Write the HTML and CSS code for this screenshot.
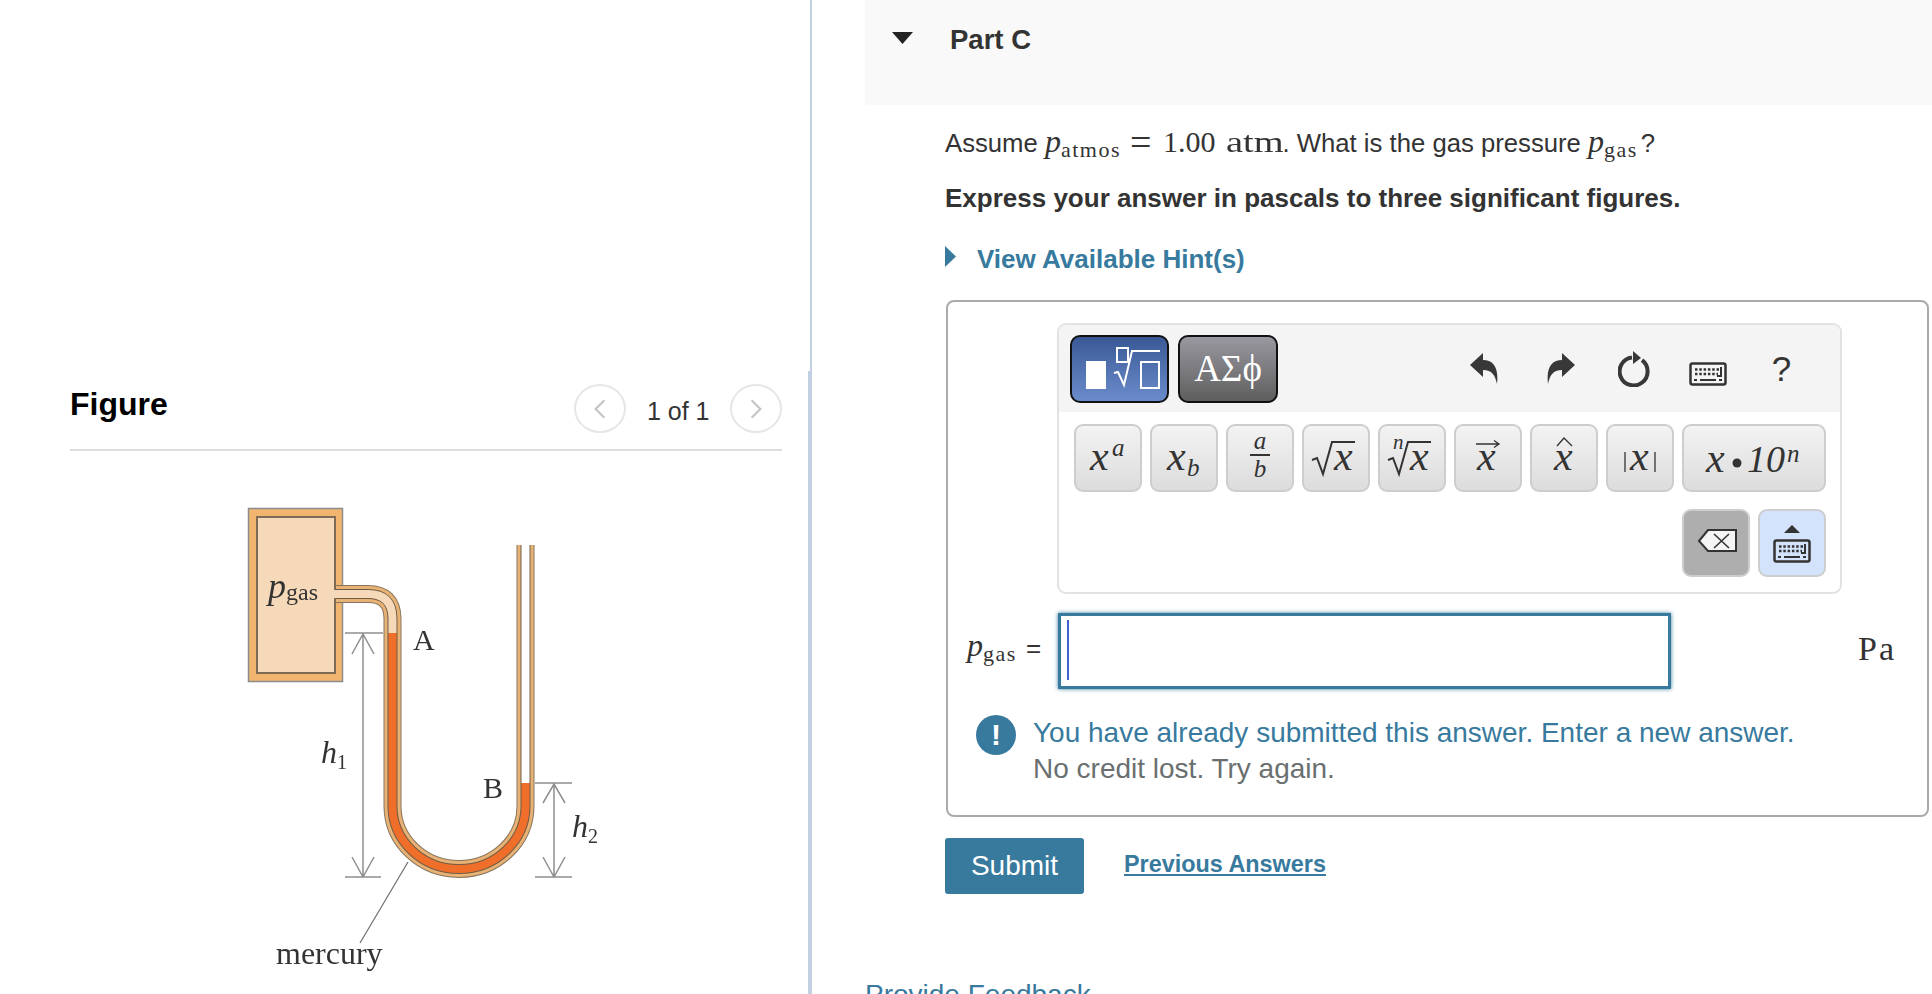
FILE: index.html
```html
<!DOCTYPE html>
<html lang="en">
<head>
<meta charset="utf-8">
<title>Part C</title>
<link rel="stylesheet" href="styles.css">
</head>
<body>
<div class="page">
  <aside class="left">
    <div class="fig-head">
      <h2 class="fig-title">Figure</h2>
      <div class="pager">
        <span class="round"><svg class="chev" viewBox="0 0 16 24"><path d="M13 2 3 12l10 10"/></svg></span>
        <span class="pager-text">1 of 1</span>
        <span class="round"><svg class="chev" viewBox="0 0 16 24"><path d="M3 2l10 10L3 22"/></svg></span>
      </div>
    </div>
    <svg class="diagram" viewBox="70 451 712 543" width="712" height="543">
      <rect x="248.5" y="508.5" width="94" height="173" fill="#f2b56f" stroke="#8c8c8c" stroke-width="1.5"/>
      <rect x="257" y="517" width="78" height="156" fill="#f6d9b8" stroke="#7d6b55" stroke-width="2"/>
      <path class="t1" d="M336 594H368Q392 594 392.500 618V806A66.500 63 0 0 0 525.500 806V545"/>
      <path class="t2" d="M336 594H368Q392 594 392.500 618V806A66.500 63 0 0 0 525.500 806V545"/>
      <path class="t3" d="M336 594H368Q392 594 392.500 618V806A66.500 63 0 0 0 525.500 806V545"/>
      <path class="bore-gas" d="M330 594H368Q392 594 392.500 618V633"/>
      <path class="bore-hg" d="M392.500 633V806A66.500 63 0 0 0 525.500 806V783"/>
      <path class="bore-air" d="M525.500 783V538"/>
      <path class="dim" d="M345 633H383M363 634V877M352 654 363 634 374 654M345 877H381M352 857 363 877 374 857"/>
      <path class="dim" d="M535 783H572M554 784V877M543 803 554 784 565 803M535 877H572M543 857 554 877 565 857"/>
      <path class="leader" d="M408 862 360 943"/>
      <text class="dt dt-p" x="268" y="598">p</text>
      <text class="dt dt-gas" x="286" y="600">gas</text>
      <text class="dt" x="413" y="650">A</text>
      <text class="dt" x="483" y="798">B</text>
      <text class="dt dt-h" x="321" y="763">h</text>
      <text class="dt dt-sub" x="337" y="769">1</text>
      <text class="dt dt-h" x="572" y="837">h</text>
      <text class="dt dt-sub" x="588" y="843">2</text>
      <text class="dt dt-merc" x="276" y="964">mercury</text>
    </svg>
  </aside>

  <div class="divider"><span class="rule-top"></span><span class="rule-bottom"></span></div>

  <main class="right">
    <header class="part-head">
      <svg class="part-caret" viewBox="0 0 21 12"><path d="M0 0H21L10.500 12Z"/></svg>
      <h1 class="part-title">Part C</h1>
    </header>

    <section class="part-body">
      <p class="question">Assume <span class="mi">p</span><span class="sub">atmos</span><span class="mn eq">=</span><span class="mn num">1.00</span><span class="mn atm">atm</span>. What is the gas pressure <span class="mi">p</span><span class="sub">gas</span><span class="qmark">?</span></p>
      <p class="express">Express your answer in pascals to three significant figures.</p>
      <p class="hint"><svg class="hint-caret" viewBox="0 0 11 21"><path d="M0 0 11 10.500 0 21Z"/></svg>View Available Hint(s)</p>

      <div class="answer">
        <div class="editor">
          <div class="ed-head">
            <button class="tab tab-blue">
              <svg viewBox="0 0 95 64" width="95" height="64"><rect x="14" y="24" width="20" height="28" fill="#fff"/><path class="wline" d="M45 11h11v14H45zM69 25h18v26H69zM42 36l4-1 6 13 8-34h28"/></svg>
            </button>
            <button class="tab tab-grey">ΑΣϕ</button>
            <div class="tools">
              <svg class="tool" width="28" height="31" viewBox="0 0 28 31"><path d="M0 12 13 0V7C23 7 29 14 27 31 25 22 22 17 13 17V24Z"/></svg>
              <svg class="tool" width="28" height="31" viewBox="0 0 28 31"><path d="M28 12 15 0V7C5 7-1 14 1 31 3 22 6 17 15 17V24Z"/></svg>
              <svg class="tool" width="32" height="36" viewBox="0 0 32 36"><path class="ring" d="M24 9.200A14 14 0 1 1 14 6.500"/><path d="M15 0 23 7 15 13Z"/></svg>
              <svg class="tool kb-tool" width="38" height="24" viewBox="0 0 38 24"><use href="#kb"/></svg>
              <span class="tool tool-q">?</span>
            </div>
          </div>
          <div class="keys">
            <button class="key"><svg viewBox="0 0 64 64"><text class="k" x="14" y="44">x</text><text class="k ks" x="36" y="30">a</text></svg></button>
            <button class="key"><svg viewBox="0 0 64 64"><text class="k" x="15" y="44">x</text><text class="k ks" x="35" y="50">b</text></svg></button>
            <button class="key"><svg viewBox="0 0 64 64"><text class="k kf" x="32" y="23">a</text><path class="kl2" d="M22 29H42"/><text class="k kf" x="32" y="51">b</text></svg></button>
            <button class="key"><svg viewBox="0 0 64 64"><path class="kl2" d="M8 34l5-2 6 16 9-32h23"/><text class="k" x="30" y="44">x</text></svg></button>
            <button class="key"><svg viewBox="0 0 64 64"><path class="kl2" d="M8 34l5-2 6 16 9-32h23"/><text class="k kn" x="13" y="23">n</text><text class="k" x="30" y="44">x</text></svg></button>
            <button class="key"><svg viewBox="0 0 64 64"><path class="kl1" d="M20 18H43M38 14.500 43 18 38 21.500"/><text class="k" x="21" y="44">x</text></svg></button>
            <button class="key"><svg viewBox="0 0 64 64"><path class="kl1" d="M25 20l7-8 8 8"/><text class="k" x="22" y="44">x</text></svg></button>
            <button class="key"><svg viewBox="0 0 64 64"><path class="kl1" d="M17 26V46M47 26V46"/><text class="k" x="22" y="44">x</text></svg></button>
            <button class="key key-wide"><svg viewBox="0 0 140 64"><text class="k" x="22" y="46">x</text><circle cx="53" cy="37" r="4.500" fill="#333"/><text class="k k10" x="63" y="46">10</text><text class="k ks" x="103" y="36">n</text></svg></button>
            <button class="key key-back"><svg viewBox="0 0 64 64"><path class="bk" d="M15 30 24 19H52V40H24Z"/><path class="bx" d="M30 23 45 37M45 23 30 37"/></svg></button>
            <button class="key key-kb"><svg viewBox="0 0 64 64"><path d="M24 22 32 14 40 22Z" fill="#333"/><svg x="13" y="28" width="38" height="24" viewBox="0 0 38 24"><use href="#kb"/></svg></svg></button>
          </div>
        </div>

        <div class="entry">
          <span class="entry-label"><span class="mi">p</span><span class="sub">gas</span></span>
          <span class="entry-eq">=</span>
          <div class="input"><span class="caret"></span></div>
          <span class="unit">Pa</span>
        </div>

        <div class="message">
          <span class="msg-icon">!</span>
          <p class="msg-text"><span class="msg-blue">You have already submitted this answer. Enter a new answer.</span><br>No credit lost. Try again.</p>
        </div>
      </div>

      <div class="actions">
        <button class="submit">Submit</button>
        <a class="prev" href="#">Previous Answers</a>
      </div>
    </section>

    <a class="feedback" href="#">Provide Feedback</a>
  </main>
</div>

<svg class="defs" width="0" height="0">
  <defs>
    <g id="kb">
      <rect x="1.500" y="1.500" width="35" height="21" rx="2" fill="none" stroke="#333" stroke-width="2.500"/>
      <path d="M6 7.500H31M6 12H29" fill="none" stroke="#333" stroke-width="2.500" stroke-dasharray="2.500 1.800"/>
      <path d="M32 5V14H28" fill="none" stroke="#333" stroke-width="2"/>
      <path d="M11 18H27" fill="none" stroke="#333" stroke-width="2"/>
      <path d="M5 18H8M30 18H33" fill="none" stroke="#333" stroke-width="2"/>
    </g>
  </defs>
</svg>
</body>
</html>
```

FILE: styles.css
```css
* { box-sizing: border-box; }
html, body { margin: 0; padding: 0; background: #fff; }
body { font-family: "Liberation Sans", Arial, sans-serif; color: #333; }
h1, h2, p { margin: 0; }
button { font-family: inherit; padding: 0; cursor: pointer; }
.defs { position: absolute; }

.page { display: flex; height: 994px; overflow: hidden; }

/* figure column */
.left { width: 808px; flex: none; padding: 384px 26px 0 70px; }
.fig-head { display: flex; align-items: flex-start; height: 67px; border-bottom: 2px solid #dedede; }
.fig-title { font-size: 32px; line-height: 40px; font-weight: 700; color: #000; }
.pager { margin-left: auto; display: flex; align-items: flex-start; }
.round { width: 52px; height: 49px; border: 2px solid #e6e6e6; border-radius: 50%; display: flex; align-items: center; justify-content: center; }
.chev { width: 14px; height: 22px; fill: none; stroke: #c4c4c4; stroke-width: 2.500; }
.pager-text { font-size: 25px; line-height: 55px; margin: 0 20.500px 0 21px; color: #333; }
.diagram { display: block; filter: blur(.5px); }
.t1, .t2, .t3, .bore-gas, .bore-hg, .bore-air { fill: none; }
.t1 { stroke: #86745e; stroke-width: 18; }
.t2 { stroke: #e8b274; stroke-width: 16; }
.t3 { stroke: #6e5c48; stroke-width: 10; }
.bore-gas { stroke: #f6d9b8; stroke-width: 8; }
.bore-hg { stroke: #ee6e2a; stroke-width: 8; }
.bore-air { stroke: #fff; stroke-width: 8; }
.dim { fill: none; stroke: #8f8f8f; stroke-width: 1.500; }
.leader { fill: none; stroke: #6d6d6d; stroke-width: 1.200; }
.dt { font-family: "Liberation Serif", serif; font-size: 30px; fill: #333; }
.dt-p { font-style: italic; font-size: 36px; }
.dt-gas { font-size: 24px; }
.dt-h { font-style: italic; font-size: 32px; }
.dt-sub { font-size: 20px; }
.dt-merc { font-size: 32px; }

.divider { width: 4px; flex: none; display: flex; flex-direction: column; align-items: flex-end; }
.rule-top { display: block; width: 2px; height: 371px; background: #c3d0e2; }
.rule-bottom { display: block; width: 4px; flex: 1; background: #c3d0e2; }

/* question column */
.right { flex: 1; min-width: 0; padding-left: 53px; }
.part-head { height: 105px; background: #f9f9f9; display: flex; align-items: flex-start; padding: 22px 0 0 27px; }
.part-caret { width: 21px; height: 12px; margin: 10px 37px 0 0; fill: #222; }
.part-title { font-size: 27.500px; line-height: 36px; font-weight: 700; color: #333; }
.part-body { padding-left: 80px; }
.question { margin-top: 20px; height: 36px; font-size: 25.700px; line-height: 36px; white-space: nowrap; }
.mi { font-family: "Liberation Serif", serif; font-style: italic; font-size: 32px; line-height: 0; }
.sub { font-family: "Liberation Serif", serif; font-size: 22px; letter-spacing: 1.500px; line-height: 0; vertical-align: -5px; }
.mn { font-family: "Liberation Serif", serif; font-size: 30px; line-height: 0; display: inline-block; }
.eq { margin-left: 9px; width: 33px; font-size: 38px; vertical-align: -3px; }
.atm { margin-left: 10px; width: 57px; transform: scaleX(1.28); transform-origin: left center; }
.qmark { margin-left: 3px; }
.express { margin-top: 19px; font-size: 26px; line-height: 36px; font-weight: 700; }
.hint { margin-top: 25px; font-size: 26px; line-height: 36px; font-weight: 700; color: #377a9e; display: flex; align-items: flex-start; }
.hint-caret { width: 11px; height: 21px; margin: 5px 21px 0 0; fill: #377a9e; }

.answer { margin: 23px 3px 0 1px; border: 2px solid #aaa; border-radius: 8px; padding: 21px 0 28px; }
.editor { width: 785px; height: 271px; margin-left: 109px; border: 2px solid #e2e2e2; border-radius: 9px; overflow: hidden; }
.ed-head { height: 87px; background: #f4f4f4; display: flex; align-items: center; padding: 0 26px 0 11px; }
.tab { height: 68px; border: 2px solid #111; border-radius: 10px; color: #fff; display: flex; align-items: center; justify-content: center; }
.tab-blue { width: 99px; background: linear-gradient(#3a5896, #6b8ccb); }
.tab-grey { width: 100px; margin-left: 9px; background: linear-gradient(#9a98a0, #5e5e5e); font-family: "Liberation Serif", serif; font-size: 37px; }
.wline { fill: none; stroke: #fff; stroke-width: 2; }
.tools { margin-left: auto; display: grid; grid-template-columns: 74px 80px 66px 82px 65px; align-items: center; justify-items: center; color: #333; }
.tool { fill: #383838; }
.ring { fill: none; stroke: #383838; stroke-width: 4; }
.kb-tool { margin-top: 10px; }
.tool-q { font-size: 35px; line-height: 36px; font-weight: 400; }
.keys { display: grid; grid-template-columns: repeat(10, 68px); grid-auto-rows: 68px; gap: 17px 8px; padding: 12px 0 0 15px; }
.key { border: 2px solid #cdcdcd; border-radius: 9px; background: linear-gradient(#f3f3f3, #dcdcdc); display: block; }
.key > svg { display: block; width: 100%; height: 100%; overflow: visible; }
.key-wide { grid-column: 9 / span 2; }
.key-back { grid-column: 9; background: #aeaeae; }
.key-kb { grid-column: 10; background: #d2e3fb; }
.k { font-family: "Liberation Serif", serif; font-style: italic; font-size: 42px; fill: #333; }
.ks { font-size: 25px; }
.kf { font-size: 25px; text-anchor: middle; }
.kn { font-size: 21px; }
.k10 { font-size: 38px; }
.kl1 { fill: none; stroke: #333; stroke-width: 1.300; }
.kl2 { fill: none; stroke: #333; stroke-width: 2; }
.bk { fill: #f4f4f4; stroke: #333; stroke-width: 2; }
.bx { fill: none; stroke: #333; stroke-width: 1.600; }

.entry { margin-top: 19px; display: flex; align-items: center; height: 76px; padding: 0 31px 0 19px; }
.entry-label { width: 59px; line-height: 36px; white-space: nowrap; }
.entry-eq { width: 32px; font-size: 26px; margin-bottom: 6px; }
.input { width: 613px; height: 76px; border: 3px solid #377a9e; box-shadow: 0 0 4px #377a9e; padding: 4px 6px; }
.caret { display: block; width: 2px; height: 60px; background: #3f62d0; }
.unit { margin-left: auto; font-family: "Liberation Serif", serif; font-size: 34px; letter-spacing: 2px; margin-bottom: 4px; }

.message { margin-top: 26px; padding-left: 28px; display: flex; align-items: flex-start; }
.msg-icon { width: 40px; height: 40px; flex: none; border-radius: 50%; background: #377a9e; color: #fff; font-size: 30px; line-height: 40px; font-weight: 700; text-align: center; }
.msg-text { margin-left: 17px; font-size: 28px; line-height: 36px; color: #6a6f70; white-space: nowrap; }
.msg-blue { color: #377a9e; }

.actions { margin-top: 21px; display: flex; align-items: center; }
.submit { width: 139px; height: 56px; border: 0; border-radius: 3px; background: #377a9e; color: #fff; font-size: 28px; }
.prev { margin: 0 0 4px 40px; color: #377a9e; font-size: 23.400px; font-weight: 700; text-decoration: underline; }
.feedback { display: block; margin-top: 83px; font-size: 28px; line-height: 36px; color: #377a9e; text-decoration: none; }
```
